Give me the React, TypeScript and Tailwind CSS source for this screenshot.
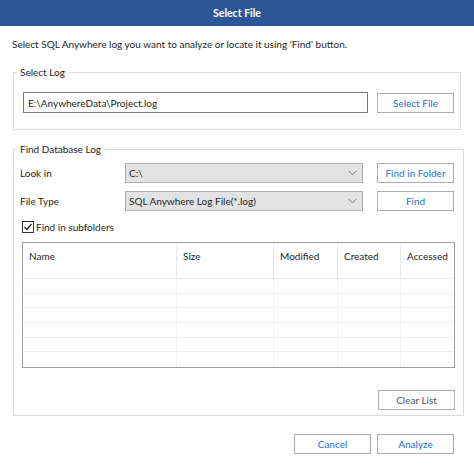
import React from "react";

const columns = [
  { label: "Name", width: "w-[154px]" },
  { label: "Size", width: "w-[97px]" },
  { label: "Modified", width: "w-[64px]" },
  { label: "Created", width: "w-[63px]" },
  { label: "Accessed", width: "flex-1" },
];

function Button({ children, muted }: { children: React.ReactNode; muted?: boolean }) {
  return (
    <button
      className={`flex h-[20px] w-[77px] shrink-0 items-center justify-center whitespace-nowrap border border-[#adadad] bg-[#fdfdfd] text-[10px] leading-none ${
        muted ? "text-[#555]" : "text-[#2b70d8]"
      }`}
    >
      {children}
    </button>
  );
}

function Combo({ value }: { value: string }) {
  return (
    <div className="flex h-[20px] w-[238px] items-center justify-between border border-[#adadad] bg-[#e3e3e3] pl-[3px] pr-[5px]">
      <span>{value}</span>
      <svg width="9" height="6" viewBox="0 0 9 6" fill="none">
        <path d="M0.5 0.8 L4.5 4.8 L8.5 0.8" stroke="#777" strokeWidth="1" />
      </svg>
    </div>
  );
}

export default function App() {
  return (
    <div className="h-[467px] w-[474px] bg-white font-['Lato',sans-serif] text-[10px] leading-[16px] text-[#1e1e1e]">
      {/* Title bar */}
      <div className="flex h-[26px] items-center justify-center bg-[#2b5797] text-[10.5px] font-bold text-white">
        Select File
      </div>

      <p className="pl-[12px] pt-[10px]">
        Select SQL Anywhere log you want to analyze or locate it using 'Find' button.
      </p>

      {/* Select Log */}
      <fieldset className="mx-[13px] mt-[12px] border border-[#dcdcdc]">
        <legend className="ml-[3px] px-[3px]">Select Log</legend>
        <div className="mt-[12px] flex items-start gap-[9px] pb-[16px] pl-[9px]">
          <div className="flex h-[21px] w-[345px] items-center border border-[#7a7a7a] bg-white pl-[4px]">
            E:\AnywhereData\Project.log
          </div>
          <div className="mt-[1px]">
            <Button>Select File</Button>
          </div>
        </div>
      </fieldset>

      {/* Find Database Log */}
      <fieldset className="mx-[13px] mt-[11px] border border-[#dcdcdc]">
        <legend className="ml-[3px] px-[3px]">Find Database Log</legend>
        <div className="mt-[6px] flex flex-col pl-[6px] pr-[8px]">
          <div className="flex items-center">
            <span className="w-[105px]">Look in</span>
            <Combo value="C:\" />
            <div className="ml-[14px]">
              <Button>Find in Folder</Button>
            </div>
          </div>
          <div className="mt-[8px] flex items-center">
            <span className="w-[105px]">File Type</span>
            <Combo value="SQL Anywhere Log File(*.log)" />
            <div className="ml-[14px]">
              <Button>Find</Button>
            </div>
          </div>

          <label className="mt-[9px] ml-[2px] flex h-[14px] items-center gap-[2px]">
            <span className="flex h-[12px] w-[12px] items-center justify-center border border-[#333] bg-white">
              <svg width="10" height="10" viewBox="0 0 10 10" fill="none">
                <path d="M1.5 5 L4 7.5 L8.5 2" stroke="#222" strokeWidth="1.2" />
              </svg>
            </span>
            Find in subfolders
          </label>

          {/* File list */}
          <div className="mt-[8px] ml-[2px] flex h-[126px] w-[433px] flex-col border border-[#a0a0a0] bg-white">
            <div className="flex h-[37px] border-b border-[#ececec]">
              {columns.map((c, i) => (
                <div
                  key={c.label}
                  className={`${c.width} pl-[6px] pt-[5px] ${i < columns.length - 1 ? "border-r border-[#e8e8e8]" : ""}`}
                >
                  {c.label}
                </div>
              ))}
            </div>
            {[0, 1, 2, 3, 4, 5].map((r) => (
              <div key={r} className="flex h-[15px] border-b border-[#efefef] last:border-b-0">
                {columns.map((c, i) => (
                  <div
                    key={c.label}
                    className={`${c.width} ${i < columns.length - 1 ? "border-r border-[#efefef]" : ""}`}
                  />
                ))}
              </div>
            ))}
          </div>

          <div className="mt-[22px] flex justify-end pb-[5px]">
            <Button muted>Clear List</Button>
          </div>
        </div>
      </fieldset>

      {/* Footer */}
      <div className="mt-[18px] flex justify-end gap-[6px] pr-[20px]">
        <Button>Cancel</Button>
        <Button>Analyze</Button>
      </div>
    </div>
  );
}
